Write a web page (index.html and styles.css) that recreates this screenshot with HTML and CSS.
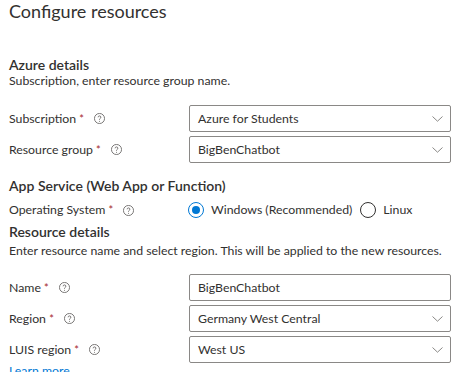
FILE: index.html
```html
<!DOCTYPE html>
<html lang="en">
<head>
<meta charset="utf-8">
<title>Configure resources</title>
<link rel="stylesheet" href="styles.css">
</head>
<body>
<div class="page">
  <h1 class="title">Configure resources</h1>

  <h2 class="heading heading-azure">Azure details</h2>
  <p class="desc">Subscription, enter resource group name.</p>
  <div class="form form-azure">
    <div class="label">Subscription <span class="req">*</span>
      <svg class="help" width="11" height="11" viewBox="0 0 12 12"><circle cx="6" cy="6" r="5.5" fill="none" stroke="#605e5c" stroke-width="0.9"/><path d="M4.5 4.7a1.5 1.5 0 1 1 2.1 1.35c-0.45 0.25-0.6 0.55-0.6 1v0.4" fill="none" stroke="#605e5c" stroke-width="0.9"/><circle cx="6" cy="8.9" r="0.55" fill="#605e5c"/></svg>
    </div>
    <div class="field select"><span>Azure for Students</span>
      <svg class="chev" width="11" height="6" viewBox="0 0 11 6"><path d="M0.5 0.5L5.5 5.2L10.5 0.5" fill="none" stroke="#8a8886" stroke-width="1"/></svg>
    </div>
    <div class="label">Resource group <span class="req">*</span>
      <svg class="help" width="11" height="11" viewBox="0 0 12 12"><circle cx="6" cy="6" r="5.5" fill="none" stroke="#605e5c" stroke-width="0.9"/><path d="M4.5 4.7a1.5 1.5 0 1 1 2.1 1.35c-0.45 0.25-0.6 0.55-0.6 1v0.4" fill="none" stroke="#605e5c" stroke-width="0.9"/><circle cx="6" cy="8.9" r="0.55" fill="#605e5c"/></svg>
    </div>
    <div class="field select"><span>BigBenChatbot</span>
      <svg class="chev" width="11" height="6" viewBox="0 0 11 6"><path d="M0.5 0.5L5.5 5.2L10.5 0.5" fill="none" stroke="#8a8886" stroke-width="1"/></svg>
    </div>
  </div>

  <h2 class="heading heading-app">App Service (Web App or Function)</h2>
  <div class="form form-os">
    <div class="label">Operating System <span class="req">*</span>
      <svg class="help" width="11" height="11" viewBox="0 0 12 12"><circle cx="6" cy="6" r="5.5" fill="none" stroke="#605e5c" stroke-width="0.9"/><path d="M4.5 4.7a1.5 1.5 0 1 1 2.1 1.35c-0.45 0.25-0.6 0.55-0.6 1v0.4" fill="none" stroke="#605e5c" stroke-width="0.9"/><circle cx="6" cy="8.9" r="0.55" fill="#605e5c"/></svg>
    </div>
    <div class="radios">
      <span class="radio radio-on"><span class="dot"></span></span><span class="radio-text">Windows (Recommended)</span>
      <span class="radio"></span><span class="radio-text">Linux</span>
    </div>
  </div>

  <h2 class="heading heading-res">Resource details</h2>
  <p class="desc desc-res">Enter resource name and select region. This will be applied to the new resources.</p>
  <div class="form form-res">
    <div class="label">Name <span class="req">*</span>
      <svg class="help" width="11" height="11" viewBox="0 0 12 12"><circle cx="6" cy="6" r="5.5" fill="none" stroke="#605e5c" stroke-width="0.9"/><path d="M4.5 4.7a1.5 1.5 0 1 1 2.1 1.35c-0.45 0.25-0.6 0.55-0.6 1v0.4" fill="none" stroke="#605e5c" stroke-width="0.9"/><circle cx="6" cy="8.9" r="0.55" fill="#605e5c"/></svg>
    </div>
    <div class="field"><span>BigBenChatbot</span></div>
    <div class="label">Region <span class="req">*</span>
      <svg class="help" width="11" height="11" viewBox="0 0 12 12"><circle cx="6" cy="6" r="5.5" fill="none" stroke="#605e5c" stroke-width="0.9"/><path d="M4.5 4.7a1.5 1.5 0 1 1 2.1 1.35c-0.45 0.25-0.6 0.55-0.6 1v0.4" fill="none" stroke="#605e5c" stroke-width="0.9"/><circle cx="6" cy="8.9" r="0.55" fill="#605e5c"/></svg>
    </div>
    <div class="field select"><span>Germany West Central</span>
      <svg class="chev" width="11" height="6" viewBox="0 0 11 6"><path d="M0.5 0.5L5.5 5.2L10.5 0.5" fill="none" stroke="#8a8886" stroke-width="1"/></svg>
    </div>
    <div class="label">LUIS region <span class="req">*</span>
      <svg class="help" width="11" height="11" viewBox="0 0 12 12"><circle cx="6" cy="6" r="5.5" fill="none" stroke="#605e5c" stroke-width="0.9"/><path d="M4.5 4.7a1.5 1.5 0 1 1 2.1 1.35c-0.45 0.25-0.6 0.55-0.6 1v0.4" fill="none" stroke="#605e5c" stroke-width="0.9"/><circle cx="6" cy="8.9" r="0.55" fill="#605e5c"/></svg>
    </div>
    <div class="field select"><span>West US</span>
      <svg class="chev" width="11" height="6" viewBox="0 0 11 6"><path d="M0.5 0.5L5.5 5.2L10.5 0.5" fill="none" stroke="#8a8886" stroke-width="1"/></svg>
    </div>
  </div>
  <a class="link" href="#">Learn more</a>
</div>
</body>
</html>
```

FILE: styles.css
```css
html, body {
  margin: 0;
  padding: 0;
  background: #ffffff;
}

body {
  font-family: Lato, "Open Sans", "Liberation Sans", sans-serif;
  color: #323130;
  font-size: 12.3px;
  overflow: hidden;
}

.page {
  padding-left: 9px;
  width: 442px;
}

.title {
  margin: 0;
  font-size: 18px;
  font-weight: 400;
  line-height: 22px;
}

.heading {
  margin: 0;
  font-size: 14px;
  font-weight: 600;
  line-height: 17px;
}

.heading-azure { margin-top: 34px; }
.heading-app { margin-top: 14px; }
.heading-res { margin-top: 0; }

.desc {
  margin: 0;
  font-size: 12.3px;
  line-height: 15px;
}

.desc-res { margin-top: 3px; }

.form {
  display: grid;
  grid-template-columns: 180px 262px;
  grid-auto-rows: 27px;
  row-gap: 4px;
  align-items: center;
}

.form-azure { margin-top: 17px; }
.form-os { margin-top: 3px; grid-auto-rows: 26px; }
.form-res { margin-top: 16px; }

.label {
  display: flex;
  align-items: center;
  line-height: 16px;
  white-space: pre;
}

.req {
  color: #a4262c;
  font-size: 11px;
}

.help {
  margin-left: 10px;
  flex: none;
}

.field {
  box-sizing: border-box;
  height: 27px;
  border: 1px solid #8a8886;
  border-radius: 2px;
  display: flex;
  align-items: center;
  justify-content: space-between;
  padding: 0 7px 0 8px;
  line-height: 16px;
}

.chev {
  flex: none;
}

.radios {
  display: flex;
  align-items: center;
  margin-left: -1px;
}

.radio {
  box-sizing: border-box;
  width: 16px;
  height: 16px;
  border: 1px solid #323130;
  border-radius: 50%;
  display: flex;
  align-items: center;
  justify-content: center;
  flex: none;
}

.radio-on {
  border-color: #0078d4;
}

.dot {
  width: 8px;
  height: 8px;
  border-radius: 50%;
  background: #0078d4;
}

.radio-text {
  margin-left: 7px;
  margin-right: 8px;
  line-height: 16px;
}

.link {
  display: block;
  color: #0078d4;
  text-decoration: none;
  line-height: 16px;
}
```
